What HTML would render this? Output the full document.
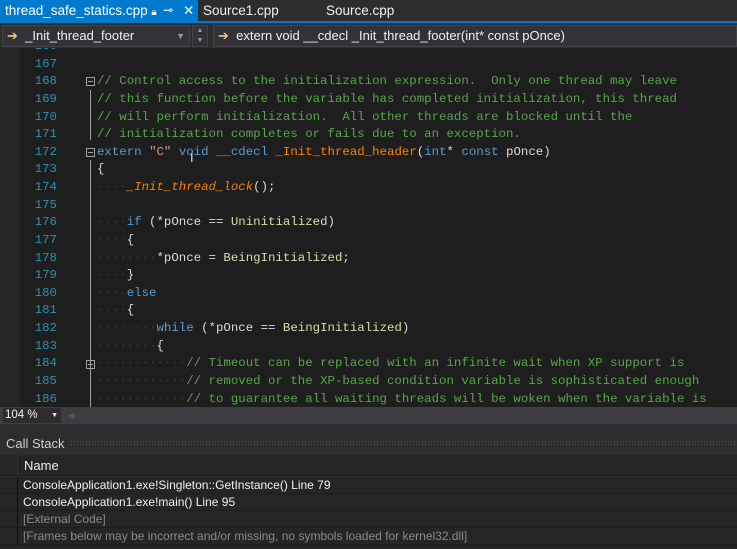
<!DOCTYPE html>
<html><head><meta charset="utf-8"><style>
*{margin:0;padding:0;box-sizing:border-box}
body{width:737px;height:549px;overflow:hidden;background:#2d2d30;font-family:"Liberation Sans",sans-serif;position:relative}
.abs{position:absolute}
.tabs{left:0;top:0;width:737px;height:21px;background:#2d2d30}
.tab1{left:0;top:0;width:198px;height:21px;background:#007acc;color:#fff;font-size:13.5px;line-height:21px;padding-left:5px}
.tabx{color:#fff;font-size:13.5px;line-height:21px}
.bluebar{left:0;top:21px;width:737px;height:2px;background:#007acc}
.nav{left:0;top:23px;width:737px;height:25px;background:#2d2d30}
.combo{top:25px;height:22px;background:#333337;border:1px solid #434346;color:#f1f1f1;font-size:13px;line-height:20px}
.editor{left:0;top:48px;width:737px;height:359px;background:#1e1e1e;overflow:hidden}
.margin{left:0;top:0;width:20px;height:359px;background:#252526}
.code{font-family:"Liberation Mono",monospace;font-size:12.4px;white-space:pre;line-height:17.63px}
.ln{color:#2b91af;width:37px;text-align:right;left:20px}
.c{color:#57a64a}.k{color:#569cd6}.f{color:#ff8000;font-style:italic}.f2{color:#ff8000}.t{color:#dcdcaa}.s{color:#d69d85}.w{color:#3a3a3a}.v{color:#dadada}
.fold{width:9px;height:9px;border:1px solid #a0a0a0;left:86px}
.fold:after{content:"";position:absolute;left:1px;top:3px;width:5px;height:1px;background:#a0a0a0}
.vline{left:90px;width:1px;background:#a0a0a0}
.row{left:0;width:737px;height:17px;font-size:12px;line-height:17px;border-bottom:1px solid #1e1e1e;background:#252526}
.row span{position:absolute;left:23px}
.row:before{content:"";position:absolute;left:17px;top:0;width:1px;height:17px;background:#111}
</style></head><body>
<div class="abs tabs"></div>
<div class="abs tab1">thread_safe_statics.cpp <span style="font-size:10px">&#x1F512;&#xFE0E;</span></div>
<div class="abs tabx" style="left:163px;font-size:12px">⊸</div>
<div class="abs tabx" style="left:183px">✕</div>
<div class="abs tabx" style="left:203px;color:#f1f1f1">Source1.cpp</div>
<div class="abs tabx" style="left:326px;color:#f1f1f1">Source.cpp</div>
<div class="abs bluebar"></div>
<div class="abs nav"></div>
<div class="abs combo" style="left:2px;width:188px"><span style="color:#f5c77e;margin-left:4px">➔</span>&nbsp; _Init_thread_footer<span style="position:absolute;right:4px;color:#999;font-size:9px">▼</span></div>
<div class="abs combo" style="left:192px;width:16px;font-size:7px;color:#999;text-align:center;line-height:10px">▲<br>▼</div>
<div class="abs combo" style="left:213px;width:524px"><span style="color:#f5c77e;margin-left:4px">➔</span>&nbsp; extern void __cdecl _Init_thread_footer(int* const pOnce)</div>
<div class="abs editor">
<div class="abs margin"></div>
<div class="abs vline" style="top:42px;height:50px"></div>
<div class="abs vline" style="top:112px;height:247px"></div>
<div class="abs fold" style="top:29px"></div>
<div class="abs fold" style="top:100px"></div>
<div class="abs fold" style="top:312px"></div>
<div class="abs code ln" style="top:-10px">166
167
168
169
170
171
172
173
174
175
176
177
178
179
180
181
182
183
184
185
186</div>
<div class="abs code" style="left:97px;top:-10px">

<span class="c">// Control access to the initialization expression.  Only one thread may leave</span>
<span class="c">// this function before the variable has completed initialization, this thread</span>
<span class="c">// will perform initialization.  All other threads are blocked until the</span>
<span class="c">// initialization completes or fails due to an exception.</span>
<span class="k">extern</span> <span class="s">"C"</span> <span class="k">void</span> <span class="k">__cdecl</span> <span class="f2">_Init_thread_header</span><span class="v">(</span><span class="k">int</span><span class="v">* </span><span class="k">const</span> <span class="v">pOnce)</span>
<span class="v">{</span>
<span class="w">····</span><span class="f">_Init_thread_lock</span><span class="v">();</span>

<span class="w">····</span><span class="k">if</span><span class="v"> (*pOnce == </span><span class="t">Uninitialized</span><span class="v">)</span>
<span class="w">····</span><span class="v">{</span>
<span class="w">········</span><span class="v">*pOnce = </span><span class="t">BeingInitialized</span><span class="v">;</span>
<span class="w">····</span><span class="v">}</span>
<span class="w">····</span><span class="k">else</span>
<span class="w">····</span><span class="v">{</span>
<span class="w">········</span><span class="k">while</span><span class="v"> (*pOnce == </span><span class="t">BeingInitialized</span><span class="v">)</span>
<span class="w">········</span><span class="v">{</span>
<span class="w">············</span><span class="c">// Timeout can be replaced with an infinite wait when XP support is</span>
<span class="w">············</span><span class="c">// removed or the XP-based condition variable is sophisticated enough</span>
<span class="w">············</span><span class="c">// to guarantee all waiting threads will be woken when the variable is</span></div>
<div class="abs" style="left:190px;top:102px;color:#ddd;font-size:13px">I</div>
</div>
<div class="abs" style="left:0;top:407px;width:737px;height:17px;background:#3e3e42"></div>
<div class="abs" style="left:3px;top:408px;width:58px;height:15px;background:#2d2d30;color:#f1f1f1;font-size:11.5px;line-height:15px;padding-left:2px">104 %<span style="position:absolute;right:3px;font-size:7px">▼</span></div>
<div class="abs" style="left:68px;top:410px;color:#555;font-size:9px">◀</div>
<div class="abs" style="left:0;top:433px;width:737px;height:21px;background:#2d2d30;color:#d0d0d0;font-size:13px;line-height:21px;padding-left:6px">Call Stack</div>
<div class="abs" style="left:70px;top:440px;width:667px;height:5px;background-image:radial-gradient(#555 0.6px,transparent 0.8px);background-size:3px 3px"></div>
<div class="abs" style="left:0;top:455px;width:737px;height:21px;background:#252526;color:#f1f1f1;font-size:13px;line-height:21px;padding-left:24px;border-bottom:1px solid #1e1e1e">Name</div>
<div class="abs" style="left:17px;top:455px;width:1px;height:21px;background:#333"></div>
<div class="abs row" style="top:477px;color:#f1f1f1"><span>ConsoleApplication1.exe!Singleton::GetInstance() Line 79</span></div>
<div class="abs row" style="top:494px;color:#f1f1f1"><span>ConsoleApplication1.exe!main() Line 95</span></div>
<div class="abs row" style="top:511px;color:#8a8a8a"><span>[External Code]</span></div>
<div class="abs row" style="top:528px;color:#8a8a8a"><span>[Frames below may be incorrect and/or missing, no symbols loaded for kernel32.dll]</span></div>
<div class="abs" style="left:0;top:545px;width:737px;height:4px;background:#252526"></div>
</body></html>
